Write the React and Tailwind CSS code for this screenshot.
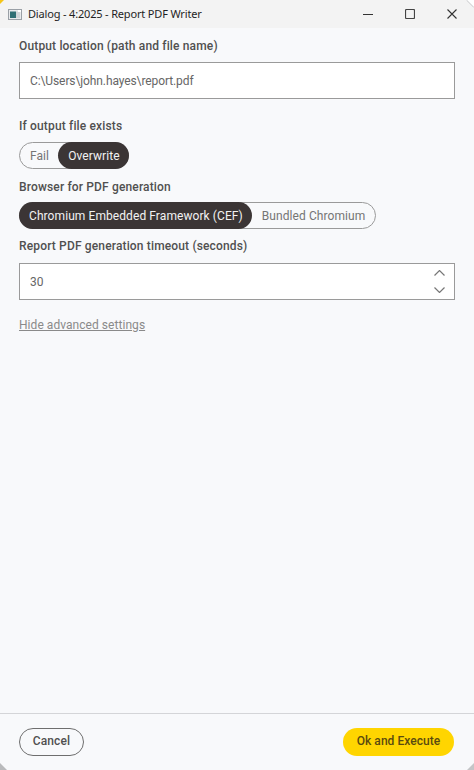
import { useState } from 'react';

function SegToggle({ options, value }) {
  return (
    <div className="flex w-fit h-[27px] rounded-full border border-[#9a9a9a] tracking-[0.08px]">
      {options.map((o) => (
        <div
          key={o}
          className={
            o === value
              ? 'flex items-center pl-[10px] pr-[9px] -m-px rounded-full bg-[#3b3535] text-[#f2f2f2]'
              : 'flex items-center pl-[11px] first:pl-[10px] pr-[10px] text-[#757575]'
          }
        >
          {o}
        </div>
      ))}
    </div>
  );
}

export default function App() {
  const [path] = useState('C:\\Users\\john.hayes\\report.pdf');

  return (
    <div className="relative flex flex-col w-[474px] h-[770px] bg-[#f8f9fb] font-['Roboto',sans-serif] text-[12px] overflow-hidden">
      <div className="flex items-center h-[28px] bg-[#f3f3f3] shrink-0">
        <svg width="14" height="11" viewBox="0 0 14 11" className="ml-[8px] mr-[2px]">
          <rect x="0.5" y="0.5" width="13" height="10" fill="#e8eaec" stroke="#9aa0a6" />
          <rect x="2" y="2.5" width="6" height="6.5" fill="#2f6f74" />
          <rect x="8" y="2.5" width="4" height="6.5" fill="#d0d5d8" />
          <rect x="10" y="1" width="3" height="2" fill="#fff" />
        </svg>
        <span className="ml-[4px] font-['Noto_Sans',sans-serif] text-[11px] tracking-[-0.17px] text-[#1f1f1f]">
          Dialog - 4:2025 - Report PDF Writer
        </span>
        <div className="flex items-center ml-auto mr-[17px] gap-[32px]">
          <svg width="10" height="10" viewBox="0 0 10 10">
            <path d="M0 5.5H10" stroke="#333" strokeWidth="1" />
          </svg>
          <svg width="10" height="10" viewBox="0 0 10 10">
            <rect x="0.5" y="0.5" width="9" height="9" rx="1" fill="none" stroke="#444" strokeWidth="1.2" />
          </svg>
          <svg width="10" height="10" viewBox="0 0 10 10">
            <path d="M0.5 0.5L9.5 9.5M9.5 0.5L0.5 9.5" stroke="#333" strokeWidth="1.1" />
          </svg>
        </div>
      </div>

      <div className="flex-1 px-[19px] pt-[11px]">
        <div className="font-medium leading-[14px] tracking-[0.15px] text-[#505050]">Output location (path and file name)</div>
        <div className="flex items-center h-[37px] mt-[9px] px-[10px] bg-white border border-[#9a9a9a] text-[#666666] tracking-[-0.1px]">
          {path}
        </div>

        <div className="mt-[20px] font-medium leading-[14px] tracking-[0.15px] text-[#505050]">If output file exists</div>
        <div className="mt-[9px]">
          <SegToggle options={['Fail', 'Overwrite']} value="Overwrite" />
        </div>

        <div className="mt-[11px] font-medium leading-[14px] tracking-[0.15px] text-[#505050]">Browser for PDF generation</div>
        <div className="mt-[8px]">
          <SegToggle options={['Chromium Embedded Framework (CEF)', 'Bundled Chromium']} value="Chromium Embedded Framework (CEF)" />
        </div>

        <div className="mt-[10px] font-medium leading-[14px] tracking-[0.15px] text-[#505050]">Report PDF generation timeout (seconds)</div>
        <div className="flex items-center justify-between h-[37px] mt-[10px] pl-[10px] pr-[9px] bg-white border border-[#9a9a9a] text-[#666666]">
          <span>30</span>
          <div className="flex flex-col gap-[11px]">
            <svg width="11" height="6" viewBox="0 0 11 6">
              <path d="M0.5 5.5L5.5 0.5L10.5 5.5" fill="none" stroke="#777" strokeWidth="1.2" />
            </svg>
            <svg width="11" height="6" viewBox="0 0 11 6">
              <path d="M0.5 0.5L5.5 5.5L10.5 0.5" fill="none" stroke="#777" strokeWidth="1.2" />
            </svg>
          </div>
        </div>

        <a href="#" className="block w-fit mt-[18px] leading-[14px] tracking-[0.05px] text-[#8a8a8a] underline">
          Hide advanced settings
        </a>
      </div>

      <div className="flex items-center justify-between h-[57px] pl-[19px] pr-[20px] border-t border-[#d4d5d8] shrink-0">
        <button className="h-[28px] w-[65px] pb-[2px] rounded-full border border-[#6e6e6e] font-medium tracking-[0.1px] text-[#505050]">
          Cancel
        </button>
        <button className="h-[28px] w-[111px] pb-[2px] rounded-full bg-[#ffd500] font-medium tracking-[0.05px] text-[#5a4a10]">
          Ok and Execute
        </button>
      </div>

      {/* window corners peeking through */}
      <svg width="6" height="6" viewBox="0 0 6 6" className="absolute top-0 left-0">
        <path d="M0 0H4L0 4Z" fill="#f5c518" />
      </svg>
      <svg width="8" height="8" viewBox="0 0 8 8" className="absolute top-0 right-0">
        <path d="M1 0L8 7" stroke="#c9cacc" strokeWidth="1.5" />
        <path d="M1 0H8V7Z" fill="#ffffff" />
      </svg>
      <svg width="8" height="8" viewBox="0 0 8 8" className="absolute bottom-0 left-0">
        <path d="M0 1L7 8H0Z" fill="#b9babc" />
      </svg>
      <svg width="8" height="8" viewBox="0 0 8 8" className="absolute bottom-0 right-0">
        <path d="M8 1V8H1Z" fill="#c4c5c7" />
      </svg>
    </div>
  );
}
